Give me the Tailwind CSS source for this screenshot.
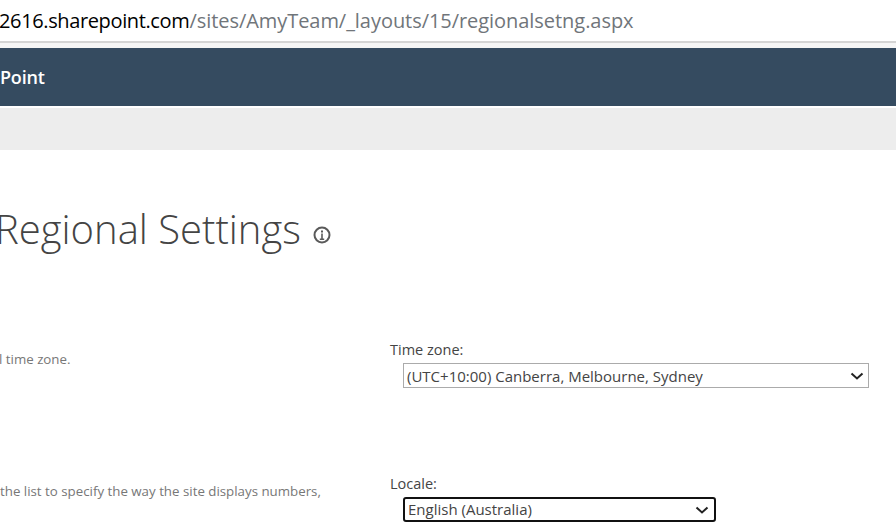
<!DOCTYPE html>
<html lang="en">
  <head>
    <meta charset="UTF-8" />
    <title>Regional Settings</title>
    <script src="https://cdn.jsdelivr.net/npm/@tailwindcss/browser@4"></script>
  </head>
  <body class="bg-white h-[531px] overflow-hidden font-['Open_Sans',sans-serif]">
    <div class="h-[41px] flex items-center whitespace-nowrap text-[20px]">
      <span class="text-black -ml-px tracking-[-0.37px]">2616.sharepoint.com</span><span class="text-[#70757a] tracking-[-0.05px]">/sites/AmyTeam/_layouts/15/regionalsetng.aspx</span>
    </div>
    <div class="h-[7px] bg-[#f5f5f5] border-t-2 border-[#d4d4d4]"></div>
    <div class="h-[58px] bg-[#354b60] flex items-center text-[18px] tracking-[-0.2px] font-semibold text-white">Point</div>
    <div class="h-[2px]"></div>
    <div class="h-[42px] bg-[#ededed]"></div>

    <div class="h-[190px] flex items-start pt-[51px] -ml-[5px] whitespace-nowrap">
      <h1 class="font-light text-[40px] leading-[56px] text-[#444]">Regional Settings</h1>
      <svg class="ml-[12px] mt-[25px]" width="18" height="18" viewBox="0 0 18 18" fill="none">
        <circle cx="9" cy="9" r="7.5" stroke="#5a5a5a" stroke-width="2" />
        <rect x="8" y="4.5" width="2" height="2" fill="#5a5a5a" />
        <path d="M9 7.5v6M6.8 13.2h4.4" stroke="#5a5a5a" stroke-width="1.6" />
      </svg>
    </div>

    <div class="grid grid-cols-[390px_1fr] h-[134px]">
      <p class="text-[13.3px] text-[#777] pt-[10px] whitespace-nowrap -ml-[1px]">l time zone.</p>
      <div>
        <p class="text-[14.5px] leading-[20px] text-[#444]">Time zone:</p>
        <div class="ml-[13px] mt-[3px] w-[466px] h-[25px] border border-[#ababab] flex items-center justify-between pl-[3px] pr-[4px] text-[15px] text-[#444]">
          <span class="pt-px">(UTC+10:00) Canberra, Melbourne, Sydney</span>
          <svg width="14" height="8" viewBox="0 0 14 8" fill="none"><path d="M1.5 1.5L7 6.5L12.5 1.5" stroke="#222" stroke-width="2" /></svg>
        </div>
      </div>
    </div>

    <div class="grid grid-cols-[390px_1fr]">
      <p class="text-[13.3px] text-[#777] pt-[8px] whitespace-nowrap">the list to specify the way the site displays numbers,</p>
      <div>
        <p class="text-[14.5px] leading-[20px] text-[#444]">Locale:</p>
        <div class="ml-[13px] mt-[3px] w-[313px] h-[25px] border-2 border-[#111] rounded-[3px] flex items-center justify-between pl-[3px] pr-[5px] text-[15px] text-[#444]">
          <span>English (Australia)</span>
          <svg width="14" height="8" viewBox="0 0 14 8" fill="none"><path d="M1.5 1.5L7 6.5L12.5 1.5" stroke="#222" stroke-width="2" /></svg>
        </div>
      </div>
    </div>
  </body>
</html>
